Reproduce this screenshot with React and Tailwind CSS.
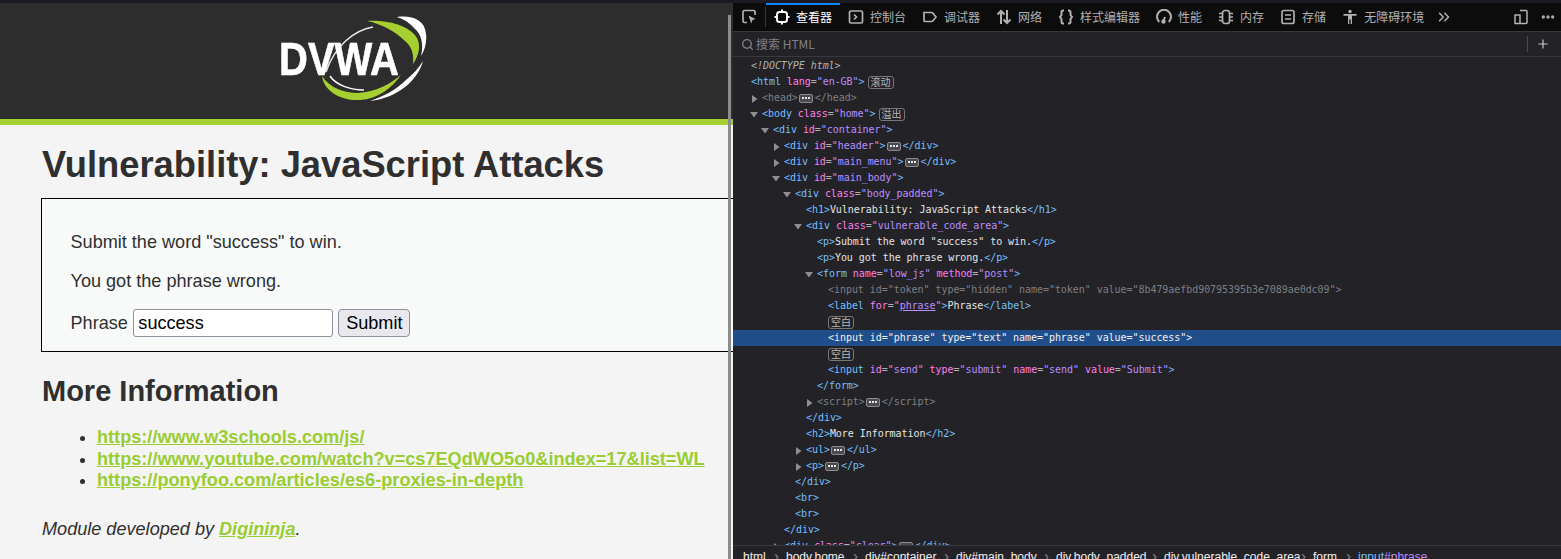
import React from "react";
import { Search, Plus, Ellipsis, ChevronsRight } from "lucide-react";

const T = ({ c }) => <span className="text-[#75bfff]">{c}</span>;
const A = ({ n, v, u }) => (
  <>
    {" "}
    <span className="text-[#ff7de9]">{n}</span>
    <span className="text-[#b1b1b3]">=</span>
    <span className="text-[#b98eff]">
      "{u ? <span className="underline">{v}</span> : v}"
    </span>
  </>
);
const Txt = ({ c }) => <span className="text-[#e3e3e5]">{c}</span>;
const Dim = ({ c }) => <span className="text-[#7e7e82]">{c}</span>;

const Badge = ({ c, first }) => (
  <span className={`inline-flex items-center h-[13px] px-[2px] align-middle rounded-[3px] border border-[#77777a] text-[10px] leading-none tracking-normal text-[#b8b8ba] font-['Noto_Sans_CJK_SC',sans-serif] ${first ? "" : "ml-[3px]"}`}>
    {c}
  </span>
);
const Dots = () => (
  <span className="inline-flex items-center justify-center gap-[1px] w-[14px] h-[9px] mx-[1.5px] align-middle rounded-[2px] border border-[#8a8a8d] bg-[#4a4a4f]">
    <i className="w-[2px] h-[2px] bg-[#e6e6e6]" />
    <i className="w-[2px] h-[2px] bg-[#e6e6e6]" />
    <i className="w-[2px] h-[2px] bg-[#e6e6e6]" />
  </span>
);

const rows = [
  { d: 0, el: <span className="italic text-[#b1b1b3]">{"<!DOCTYPE html>"}</span> },
  { d: 0, el: <><T c="<html" /><A n="lang" v="en-GB" /><T c=">" /><Badge c="滚动" /></> },
  { d: 1, arrow: "r", el: <><Dim c="<head>" /><Dots /><Dim c="</head>" /></> },
  { d: 1, arrow: "d", el: <><T c="<body" /><A n="class" v="home" /><T c=">" /><Badge c="溢出" /></> },
  { d: 2, arrow: "d", el: <><T c="<div" /><A n="id" v="container" /><T c=">" /></> },
  { d: 3, arrow: "r", el: <><T c="<div" /><A n="id" v="header" /><T c=">" /><Dots /><T c="</div>" /></> },
  { d: 3, arrow: "r", el: <><T c="<div" /><A n="id" v="main_menu" /><T c=">" /><Dots /><T c="</div>" /></> },
  { d: 3, arrow: "d", el: <><T c="<div" /><A n="id" v="main_body" /><T c=">" /></> },
  { d: 4, arrow: "d", el: <><T c="<div" /><A n="class" v="body_padded" /><T c=">" /></> },
  { d: 5, el: <><T c="<h1>" /><Txt c="Vulnerability: JavaScript Attacks" /><T c="</h1>" /></> },
  { d: 5, arrow: "d", el: <><T c="<div" /><A n="class" v="vulnerable_code_area" /><T c=">" /></> },
  { d: 6, el: <><T c="<p>" /><Txt c={'Submit the word "success" to win.'} /><T c="</p>" /></> },
  { d: 6, el: <><T c="<p>" /><Txt c="You got the phrase wrong." /><T c="</p>" /></> },
  { d: 6, arrow: "d", el: <><T c="<form" /><A n="name" v="low_js" /><A n="method" v="post" /><T c=">" /></> },
  { d: 7, el: <Dim c={'<input id="token" type="hidden" name="token" value="8b479aefbd90795395b3e7089ae0dc09">'} /> },
  { d: 7, el: <><T c="<label" /><A n="for" v="phrase" u /><T c=">" /><Txt c="Phrase" /><T c="</label>" /></> },
  { d: 7, el: <Badge first c="空白" /> },
  { d: 7, sel: true },
  { d: 7, el: <Badge first c="空白" /> },
  { d: 7, el: <><T c="<input" /><A n="id" v="send" /><A n="type" v="submit" /><A n="name" v="send" /><A n="value" v="Submit" /><T c=">" /></> },
  { d: 6, el: <T c="</form>" /> },
  { d: 6, arrow: "r", el: <><Dim c="<script>" /><Dots /><Dim c="</script>" /></> },
  { d: 5, el: <T c="</div>" /> },
  { d: 5, el: <><T c="<h2>" /><Txt c="More Information" /><T c="</h2>" /></> },
  { d: 5, arrow: "r", el: <><T c="<ul>" /><Dots /><T c="</ul>" /></> },
  { d: 5, arrow: "r", el: <><T c="<p>" /><Dots /><T c="</p>" /></> },
  { d: 4, el: <T c="</div>" /> },
  { d: 4, el: <T c="<br>" /> },
  { d: 4, el: <T c="<br>" /> },
  { d: 3, el: <T c="</div>" /> },
  { d: 3, arrow: "r", el: <><T c="<div" /><A n="class" v="clear" /><T c=">" /><Dots /><T c="</div>" /></> },
];

const Arrow = ({ dir }) =>
  dir === "r" ? (
    <svg width="6" height="8" viewBox="0 0 6 8" className="absolute left-[-10px] top-[3px]">
      <path d="M0 0 L5.500 4 L0 8 Z" fill="#8f8f92" />
    </svg>
  ) : (
    <svg width="8" height="6" viewBox="0 0 8 6" className="absolute left-[-12px] top-[4px]">
      <path d="M0 0 L8 0 L4 5.500 Z" fill="#8f8f92" />
    </svg>
  );

const TreeRow = ({ row }) => {
  if (row.sel) {
    return (
      <div className="h-4 leading-4 bg-[#204e8a] pl-[95px] whitespace-pre text-[#f0f0f2]">
        {'<input id="phrase" type="text" name="phrase" value="success">'}
      </div>
    );
  }
  return (
    <div className="h-4 leading-4 whitespace-pre" style={{ paddingLeft: 18 + row.d * 11 }}>
      <span className="relative">
        {row.arrow && <Arrow dir={row.arrow} />}
        {row.el}
      </span>
    </div>
  );
};

// coordinates are the page's own, so the viewBox starts at the logo's corner
const Logo = () => (
  <svg width="155" height="92" viewBox="275 13 155 92" className="blur-[0.4px]">
    <path d="M367 21 C385 20 408 24 417 38 C421 46 419 55 413 64 C414 54 412 47 405 41 C396 32 382 24 367 21 Z" fill="#a6d02f" />
    <path d="M397 17 C412 15 425 20 426 34 C427 42 425 50 421 56 C424 44 421 34 415 29 C410 23 404 19 397 17 Z" fill="#fff" />
    <path d="M423 61 C418 80 398 98 370 101 C384 96 396 90 406 80 C413 74 419 68 423 61 Z" fill="#fff" />
    <path d="M322 76 C324 92 342 101 360 100 C378 99 392 88 401 75 C390 84 376 92 358 93 C344 93 330 88 322 76 Z" fill="#a6d02f" />
    <path d="M373 27 C355 30 335 45 326 72" stroke="#e8e8e8" strokeWidth="1.500" fill="none" />
    <path d="M330 76 C336 85 350 90 364 90" stroke="#fff" strokeWidth="1.500" fill="none" />
    <text x="279" y="75" fontFamily="'Liberation Sans', sans-serif" fontWeight="700" fontSize="46" fill="#fff" stroke="#fff" strokeWidth="0.600" textLength="120" lengthAdjust="spacingAndGlyphs">
      DVWA
    </text>
  </svg>
);

const Tab = ({ icon, label, active }) => (
  <div className={`relative flex items-center gap-[6px] h-[28px] px-[8px] shrink-0 ${active ? "text-white" : "text-[#b1b1b3]"}`}>
    {active && <div className="absolute top-0 left-0 right-0 h-[2px] bg-[#0a84ff]" />}
    {icon}
    <span className="text-[12px] font-['Noto_Sans_CJK_SC',sans-serif]">{label}</span>
  </div>
);

const Ic = ({ children, sw = 1.7 }) => (
  <svg width="16" height="16" viewBox="0 0 16 16" fill="none" stroke="currentColor" strokeWidth={sw}>
    {children}
  </svg>
);

const crumbs = [
  ["html", "w-[43px]"],
  ["body.home", "w-[79px]"],
  ["div#container", "w-[91px]"],
  ["div#main_body", "w-[100px]"],
  ["div.body_padded", "w-[108px]"],
  ["div.vulnerable_code_area", "w-[149px]"],
  ["form", "w-[45px]"],
];

export default function App() {
  return (
    <div className="flex w-[1561px] h-[559px] overflow-hidden font-['Liberation_Sans',sans-serif]">
      {/* page */}
      <div className="relative w-[733px] shrink-0 bg-[#f4f4f4] text-[#2f2f2f] overflow-hidden flex flex-col">
        <div className="h-[3px] bg-[#1c1b22] shrink-0" />
        <div className="h-[116px] bg-[#2d2d2d] shrink-0 pl-[275px] pt-[10px]">
          <Logo />
        </div>
        <div className="h-[6px] bg-[#a6d02f] shrink-0" />
        <div className="pl-[41px] w-[780px] shrink-0">
          <h1 className="mt-[17px] ml-[1px] text-[36.3px] leading-[46px] font-bold">Vulnerability: JavaScript Attacks</h1>
          <div className="mt-[10px] h-[154px] border border-black bg-[#f8fafa] pl-[28.5px] pt-[33px] text-[18.1px] leading-[21px]">
            <p>Submit the word "success" to win.</p>
            <p className="mt-[18px]">You got the phrase wrong.</p>
            <div className="mt-[17px] flex items-center">
              <span>Phrase</span>
              <input readOnly value="success" className="ml-[5.5px] w-[200px] h-[28px] px-[4px] bg-white text-black border border-[#8f8f9d] rounded-[3px] outline-none" />
              <button className="ml-[5px] w-[72px] h-[28px] bg-[#e9e9ed] text-black border border-[#8f8f9d] rounded-[4px]">Submit</button>
            </div>
          </div>
          <h2 className="mt-[21px] ml-[1px] text-[29px] leading-[36px] font-bold">More Information</h2>
          <ul className="mt-[18px] ml-[56px] list-disc text-[18.15px] leading-[21.5px] font-bold">
            <li><span className="text-[#9acd32] underline">https://www.w3schools.com/js/</span></li>
            <li><span className="text-[#9acd32] underline">https://www.youtube.com/watch?v=cs7EQdWO5o0&amp;index=17&amp;list=WL</span></li>
            <li><span className="text-[#9acd32] underline">https://ponyfoo.com/articles/es6-proxies-in-depth</span></li>
          </ul>
          <p className="mt-[27.5px] ml-[1px] text-[18.1px] leading-[21px] italic">
            Module developed by <span className="font-bold text-[#9acd32] underline">Digininja</span>.
          </p>
        </div>
        {/* overlay scrollbar */}
        <div className="absolute left-[728px] top-[15px] bottom-0 w-[3px] bg-[#8c8c8c]" />
      </div>

      {/* devtools */}
      <div className="flex-1 min-w-0 bg-[#232327] flex flex-col overflow-hidden">
        <div className="h-[3px] bg-[#1c1b22] shrink-0" />
        <div className="h-[28px] shrink-0 bg-[#0c0c0d] flex items-center text-[#b1b1b3]">
          <div className="w-[33px] h-[20px] flex items-center justify-center border-r border-[#38383d]">
            <Ic>
              <path d="M14 6V3a1.500 1.500 0 0 0-1.500-1.500h-9A1.500 1.500 0 0 0 2 3v9a1.500 1.500 0 0 0 1.500 1.500H6" />
              <path d="M7.500 6.500l7 3.500-3 1-1.200 3.500z" fill="currentColor" stroke="none" />
            </Ic>
          </div>
          <Tab active label="查看器" icon={<Ic sw={2}><rect x="3" y="3" width="10" height="10" rx="2.500" /><path d="M8 0.500v2.500M8 13v2.500M0.500 8H3M13 8h2.500" /></Ic>} />
          <Tab label="控制台" icon={<Ic><rect x="1.500" y="2" width="13" height="12" rx="1.500" /><path d="M6 5.500l2.500 2.500L6 10.500" /></Ic>} />
          <Tab label="调试器" icon={<Ic><path d="M2 3.500h7.500a2 2 0 0 1 1.500.700L14 8l-3 3.800a2 2 0 0 1-1.500.700H3a1 1 0 0 1-1-1z" /></Ic>} />
          <Tab label="网络" icon={<Ic sw={2}><path d="M5 15V2M1.500 5.500 5 2l3.500 3.500M11 1v13M7.500 10.500 11 14l3.500-3.500" /></Ic>} />
          <Tab label="样式编辑器" icon={<Ic sw={2}><path d="M6 1.500H5A1.500 1.500 0 0 0 3.500 3v3L2 8l1.500 2v3A1.500 1.500 0 0 0 5 14.500h1M10 1.500h1A1.500 1.500 0 0 1 12.500 3v3L14 8l-1.500 2v3a1.500 1.500 0 0 1-1.500 1.500h-1" /></Ic>} />
          <Tab label="性能" icon={<Ic sw={2}><path d="M3.300 13a7 7 0 1 1 9.400 0" /><path d="M7.500 12l1.500-4" /><circle cx="7.500" cy="12.500" r="1.200" fill="currentColor" /></Ic>} />
          <Tab label="内存" icon={<Ic><rect x="4.500" y="1.500" width="7" height="13" rx="2.500" /><path d="M1 4.500h3M1 8h3M1 11.500h3M12 4.500h3M12 8h3M12 11.500h3" /></Ic>} />
          <Tab label="存储" icon={<Ic><rect x="2" y="1.500" width="12" height="13" rx="2" /><path d="M5 6h6M5 10h6" /></Ic>} />
          <Tab label="无障碍环境" icon={<svg width="16" height="16" viewBox="0 0 16 16" fill="currentColor"><circle cx="8" cy="2.500" r="1.700" /><path d="M1.500 5h13v1.800H10V15H8.700v-4.500H7.300V15H6V6.800H1.500z" /></svg>} />
          <ChevronsRight size={18} strokeWidth={2} className="ml-[3px]" />
          <div className="ml-auto flex items-center gap-[11px] pr-[5px]">
            <Ic sw={1.500}><path d="M7 1.500h6a1 1 0 0 1 1 1v11a1 1 0 0 1-1 1H7M2 6h5v8.500H2z" /></Ic>
            <Ellipsis size={16} strokeWidth={3} />
          </div>
        </div>
        <div className="h-[26px] shrink-0 border-y border-[#38383d] flex items-center pl-[8px] text-[#808084]">
          <Search size={13} strokeWidth={2.500} />
          <span className="ml-[2px] text-[12px] leading-none font-['Noto_Sans_CJK_SC',sans-serif]">搜索 HTML</span>
          <div className="ml-auto w-[1px] h-[16px] bg-[#4a4a4f]" />
          <Plus size={14} strokeWidth={2} className="ml-[8px] mr-[11px] text-[#c8c8ca]" />
        </div>
        <div className="flex-1 min-h-0 overflow-hidden pt-[1px] font-['DejaVu_Sans_Mono',monospace] text-[10px] tracking-[-0.05px]">
          {rows.map((row, i) => (
            <TreeRow key={i} row={row} />
          ))}
        </div>
        <div className="h-[14px] shrink-0 border-t border-[#38383d] bg-[#232327] flex items-start pl-[10px] pt-[3px] text-[12px] leading-[16px] text-[#f0f0f0] whitespace-nowrap overflow-hidden">
          {crumbs.map(([c, w]) => (
            <span key={c} className={`flex justify-between pr-[7px] shrink-0 ${w}`}>
              {c}
              <span className="text-[#8f8f92] text-[14px] leading-[14px]">›</span>
            </span>
          ))}
          <span className="text-[#75bfff]">input<span className="text-[#b98eff]">#phrase</span></span>
        </div>
      </div>
    </div>
  );
}
